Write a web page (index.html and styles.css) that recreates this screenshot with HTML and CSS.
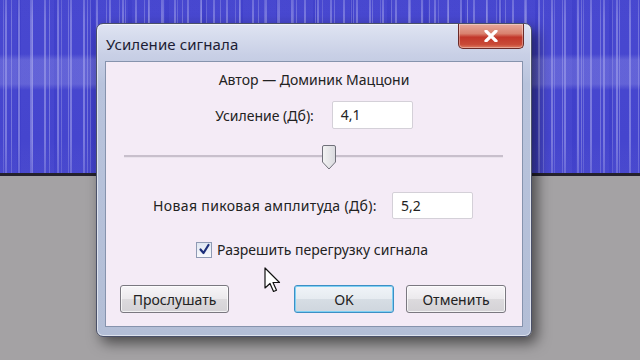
FILE: index.html
```html
<!DOCTYPE html>
<html lang="ru">
<head>
<meta charset="utf-8">
<title>Усиление сигнала</title>
<link rel="stylesheet" href="styles.css">
</head>
<body>
<div class="desk">
  <div class="wave"></div>
  <div class="floor"></div>

  <div class="window">
    <div class="titlebar">
      <span class="title">Усиление сигнала</span>
      <span class="close">
        <svg width="16" height="12" viewBox="0 0 16 12"><path d="M3 1 L13 11 M13 1 L3 11" stroke="#fff" stroke-width="3.2" stroke-linecap="round"/></svg>
      </span>
    </div>
    <div class="client">
      <p class="author">Автор — Доминик Маццони</p>
      <div class="row row-gain">
        <span class="label">Усиление (Дб):</span>
        <span class="field">4,1</span>
      </div>
      <div class="slider">
        <div class="track"></div>
        <svg class="thumb" width="14" height="25" viewBox="0 0 14 25">
          <defs><linearGradient id="tg" x1="0" x2="1"><stop offset="0" stop-color="#f4f4f4"/><stop offset="1" stop-color="#d9d9de"/></linearGradient></defs>
          <path d="M2 0.5 H12 Q13.5 0.5 13.5 2 V17 L7 24 L0.5 17 V2 Q0.5 0.5 2 0.5 Z" fill="url(#tg)" stroke="#70707a" stroke-width="1"/>
        </svg>
      </div>
      <div class="row row-peak">
        <span class="label label-peak">Новая пиковая амплитуда (Дб):</span>
        <span class="field">5,2</span>
      </div>
      <div class="check">
        <span class="box">
          <svg width="13" height="13" viewBox="0 0 13 13"><path d="M2.5 6.5 L5.5 10 L10.5 2" fill="none" stroke="#1d2f7a" stroke-width="2.2" stroke-linecap="round" stroke-linejoin="round"/></svg>
        </span>
        <span class="check-label">Разрешить перегрузку сигнала</span>
      </div>
      <div class="buttons">
        <span class="btn btn-preview">Прослушать</span>
        <span class="spacer"></span>
        <span class="btn btn-ok">OK</span>
        <span class="btn btn-cancel">Отменить</span>
      </div>
    </div>
  </div>

  <svg class="cursor" width="19" height="27" viewBox="0 0 19 27">
    <path d="M1 1 L1 21 L6 16.5 L9.5 24.5 L12.5 23.2 L9 15.5 L15.5 15.5 Z" fill="#fff" stroke="#111" stroke-width="1.2" stroke-linejoin="round"/>
  </svg>
</div>
</body>
</html>
```

FILE: styles.css
```css
* { box-sizing: border-box; }
html, body { margin: 0; padding: 0; }
body {
  width: 640px;
  height: 360px;
  overflow: hidden;
  font-family: "Noto Sans", "DejaVu Sans", sans-serif;
  background: #a3a1a3;
}
.desk {
  position: relative;
  width: 640px;
  height: 360px;
  display: flex;
  flex-direction: column;
}
.wave {
  height: 176px;
  flex: none;
  border-bottom: 3px solid #25222c;
  background:
    linear-gradient(180deg, rgba(70,70,205,0.25) 0, rgba(70,70,205,0) 20px, rgba(70,70,205,0) 54px, rgba(165,165,235,0.3) 60px, rgba(165,165,235,0.3) 84px, rgba(70,70,205,0) 90px, rgba(70,70,205,0) 140px, rgba(70,70,205,0.35) 176px),
    repeating-linear-gradient(90deg, transparent 0 5px, rgba(165,165,235,0.55) 5px 7px, transparent 7px 13px),
    repeating-linear-gradient(90deg, transparent 0 11px, rgba(160,160,232,0.5) 11px 12px, transparent 12px 19px),
    repeating-linear-gradient(90deg, transparent 0 3px, rgba(150,150,228,0.45) 3px 4px, transparent 4px 29px),
    repeating-linear-gradient(90deg, transparent 0 17px, rgba(60,60,200,0.6) 17px 21px, transparent 21px 37px),
    linear-gradient(180deg, #4848d0 0, #4545ce 140px, #4b4bcf 176px);
}
.floor {
  flex: 1;
  background: #a4a2a4;
}
.window {
  position: absolute;
  left: 96px;
  top: 23px;
  width: 436px;
  height: 314px;
  border-radius: 7px;
  border: 1px solid #4a5068;
  background: linear-gradient(180deg, #dfe4f2 0, #c9d0e6 30px, #b8c3dc 60px, #b3bed6 100%);
  box-shadow: 5px 6px 14px rgba(0,0,0,0.55), inset 0 0 0 1px rgba(255,255,255,0.55);
  display: flex;
  flex-direction: column;
  padding: 0 8px 9px 8px;
}
.titlebar {
  height: 37px;
  flex: none;
  display: flex;
  align-items: flex-start;
  justify-content: space-between;
}
.title {
  margin-top: 10px;
  margin-left: 1px;
  font-size: 15px;
  color: #1c1c34;
  letter-spacing: 0.1px;
}
.close {
  width: 66px;
  height: 25px;
  margin-right: -1px;
  border: 1px solid #6b2a28;
  border-top: none;
  border-radius: 0 0 5px 5px;
  background: linear-gradient(180deg, #e7a99c 0, #d9826f 40%, #c2372a 55%, #c94a37 85%, #de7d63 100%);
  box-shadow: inset 0 0 0 1px rgba(255,255,255,0.35);
  display: flex;
  align-items: center;
  justify-content: center;
}
.client {
  flex: 1;
  border: 1px solid #8693ad;
  background: #f4ebf6;
  display: flex;
  flex-direction: column;
  color: #222;
  font-size: 14px;
}
.author {
  margin: 9px 0 0 0;
  text-align: center;
  line-height: 18px;
}
.row {
  display: flex;
  align-items: center;
  justify-content: center;
}
.row-gain { margin-top: 12px; gap: 18px; }
.row-peak { margin-top: 21px; gap: 15px; padding-right: 2px; }
.label-peak { letter-spacing: 0.35px; }
.field {
  flex: none;
  background: #fff;
  border: 1px solid #d4d0d8;
  border-radius: 2px;
  height: 28px;
  width: 81px;
  padding: 3px 0 0 8px;
  line-height: 20px;
}
.row-peak .field { height: 27px; }
.slider {
  position: relative;
  height: 26px;
  margin: 16px 19px 0 18px;
}
.track {
  position: absolute;
  left: 0;
  right: 0;
  top: 10px;
  height: 3px;
  background: #c8bfcc;
  border-bottom: 1px solid #e9e2ec;
}
.thumb {
  position: absolute;
  left: 198px;
  top: 0;
}
.check {
  margin-top: 21px;
  display: flex;
  align-items: center;
  justify-content: center;
  gap: 5px;
  padding-right: 4px;
}
.box {
  width: 16px;
  height: 16px;
  border: 1px solid #8f9ab4;
  background: linear-gradient(180deg, #dfe6f2, #f8f9fc);
  display: flex;
  align-items: center;
  justify-content: center;
}
.buttons {
  margin-top: 26px;
  display: flex;
  padding: 0 16px 0 14px;
  gap: 12px;
}
.spacer { flex: 1; }
.btn {
  height: 28px;
  border: 1px solid #7a7880;
  border-radius: 3px;
  background: linear-gradient(180deg, #f7f5f8 0, #ebe9ec 50%, #dcdadd 51%, #d4d2d6 100%);
  box-shadow: inset 0 0 0 1px rgba(255,255,255,0.7);
  display: flex;
  align-items: center;
  justify-content: center;
  font-size: 14px;
  color: #222;
}
.btn-preview { width: 109px; }
.btn-ok {
  width: 100px;
  border-color: #3d8fc4;
  box-shadow: inset 0 0 0 1px #7fd0f4;
  background: linear-gradient(180deg, #f0f4f8 0, #e6ebf0 50%, #d6dde4 51%, #cfd6de 100%);
}
.btn-cancel { width: 100px; }
.cursor {
  position: absolute;
  left: 264px;
  top: 267px;
}
```
